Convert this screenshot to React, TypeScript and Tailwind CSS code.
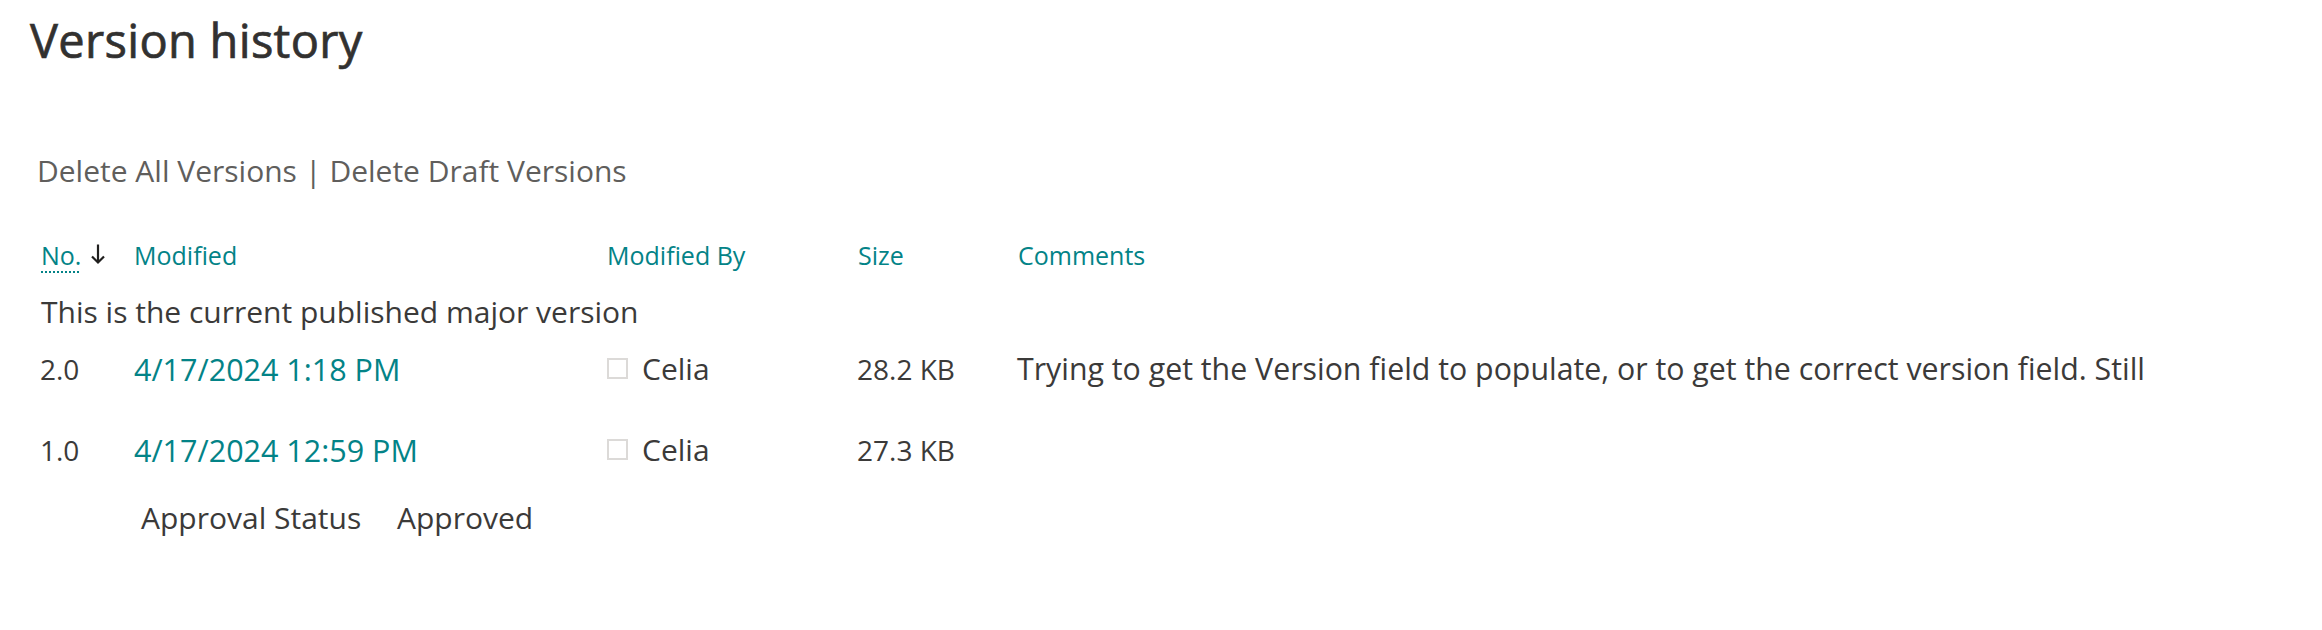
import React from 'react';

interface VersionRow {
  no: string;
  modified: string;
  modifiedBy: string;
  size: string;
  comment?: string;
  approval?: string;
}

const rows: VersionRow[] = [
  {
    no: '2.0',
    modified: '4/17/2024 1:18 PM',
    modifiedBy: 'Celia',
    size: '28.2 KB',
    comment: 'Trying to get the Version field to populate, or to get the correct version field. Still',
  },
  {
    no: '1.0',
    modified: '4/17/2024 12:59 PM',
    modifiedBy: 'Celia',
    size: '27.3 KB',
    approval: 'Approved',
  },
];

const cols = 'grid grid-cols-[93px_473px_251px_160px_1fr] items-center';

const App: React.FC = () => {
  return (
    <div className="w-[2322px] h-[630px] bg-white font-['Open_Sans',sans-serif] text-[#3b3a39]">
      {/* Title */}
      <h1 className="pl-[30px] pt-[12px] text-[47px] leading-[56px] font-normal tracking-[0.3px] [-webkit-text-stroke:0.7px_#323130] text-[#323130]">
        Version history
      </h1>

      {/* Actions */}
      <div className="mt-[82px] pl-[37px] h-[40px] flex items-center text-[30px] text-[#605e5c]">
        <span>Delete All Versions</span>
        <span className="mx-[8px]">|</span>
        <span>Delete Draft Versions</span>
      </div>

      <div className="pl-[41px]">
        {/* Column headers */}
        <div className={`${cols} mt-[47px] h-[36px] text-[25px] text-[#038387]`}>
          <div className="flex items-center">
            <span className="underline decoration-dotted decoration-2 underline-offset-[6px]">No.</span>
            <svg className="ml-[9px] -mt-[4px]" width="16" height="22" viewBox="0 0 16 22" fill="none">
              <path d="M8 1.5v18M2 13.5l6 6 6-6" stroke="#201f1e" strokeWidth="2.2" />
            </svg>
          </div>
          <div>Modified</div>
          <div>Modified By</div>
          <div>Size</div>
          <div>Comments</div>
        </div>

        <div className="mt-[18px] h-[40px] flex items-center text-[30px]">
          This is the current published major version
        </div>

        {rows.map((row, i) => (
          <div key={row.no} className={i === 0 ? 'mt-[15px]' : 'mt-[41px]'}>
            <div className={`${cols} h-[40px] text-[30px]`}>
              <div className="text-[28px] -ml-[1px]">{row.no}</div>
              <div className="text-[30.5px] text-[#038387] translate-y-[1px]">{row.modified}</div>
              <div className="flex items-center">
                <span className="w-[21px] h-[21px] border-2 border-[#dcdad8] mr-[14px]" />
                <span>{row.modifiedBy}</span>
              </div>
              <div className="text-[28px] -ml-[1px]">{row.size}</div>
              <div className="-ml-[1px] text-[30.3px] whitespace-nowrap">{row.comment}</div>
            </div>
            {row.approval && (
              <div className="mt-[30px] h-[40px] flex items-center pl-[100px] text-[30px]">
                <span className="w-[256px]">Approval Status</span>
                <span>{row.approval}</span>
              </div>
            )}
          </div>
        ))}
      </div>
    </div>
  );
};

export default App;
